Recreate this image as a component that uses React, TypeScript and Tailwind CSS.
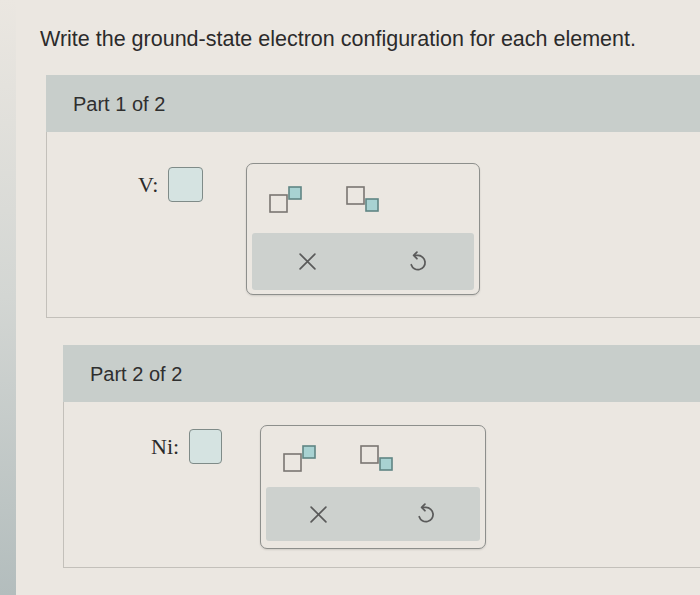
import React from 'react';

const SuperIcon = () => (
  <svg width="34" height="27" viewBox="0 0 34 27" fill="none">
    <rect x="1" y="9" width="17" height="17" stroke="#7a7672" strokeWidth="1.6" />
    <rect x="20" y="1" width="12" height="12" fill="#a8d2d2" stroke="#5f8584" strokeWidth="1.6" />
  </svg>
);

const SubIcon = () => (
  <svg width="34" height="27" viewBox="0 0 34 27" fill="none">
    <rect x="1" y="1" width="17" height="17" stroke="#7a7672" strokeWidth="1.6" />
    <rect x="20" y="13" width="12" height="12" fill="#a8d2d2" stroke="#5f8584" strokeWidth="1.6" />
  </svg>
);

const CloseIcon = () => (
  <svg width="19" height="19" viewBox="0 0 18 18" fill="none" stroke="#5a5a5a" strokeWidth="1.6" strokeLinecap="round">
    <path d="M2 2 L16 16 M16 2 L2 16" />
  </svg>
);

const UndoIcon = () => (
  <svg width="22" height="24" viewBox="0 0 20 22" fill="none" stroke="#5a5a5a" strokeWidth="1.6" strokeLinecap="round" strokeLinejoin="round">
    <path d="M7 5 H10 A6.5 6.5 0 1 1 3.8 13.5" />
    <path d="M9 2 L6 5 L9 8" />
  </svg>
);

// tool palette shown beside each answer box
const Palette = ({ big }: { big: boolean }) => (
  <div
    className={`flex flex-col rounded-[7px] border-[1.5px] border-[#8d8f8c] bg-[#ebe7e1] shadow-[0_1px_2px_rgba(0,0,0,0.12)] ${
      big ? 'w-[234px] h-[132px]' : 'w-[226px] h-[124px]'
    }`}
  >
    <div className={`flex items-end gap-[43px] pl-[22px] ${big ? 'h-[69px] pb-[20px]' : 'h-[61px] pb-[15px]'}`}>
      <SuperIcon />
      <SubIcon />
    </div>
    <div
      className={`mx-[5px] flex flex-1 items-center justify-around rounded-[3px] bg-[#cdd1ce] ${
        big ? 'mb-[4px]' : 'mb-[7px]'
      }`}
    >
      <CloseIcon />
      <UndoIcon />
    </div>
  </div>
);

interface PartProps {
  title: string;
  element: string;
  first: boolean;
}

const Part: React.FC<PartProps> = ({ title, element, first }) => (
  <div className={first ? 'ml-[46px]' : 'ml-[63px] mt-[27px]'}>
    <div className="flex h-[57px] items-center bg-[#c8cecb] pl-[27px] text-[20px] text-[#2f2f2f]">
      {title}
    </div>
    <div
      className={`flex items-start border-b border-l border-[#c3c0ba] bg-[#ebe7e1] ${
        first ? 'h-[186px] pt-[31px] pl-[91px]' : 'h-[166px] pt-[23px] pl-[87px]'
      }`}
    >
      <div className="mt-[4px] flex items-center gap-[10px]">
        <span className="font-['Liberation_Serif',serif] text-[22px] text-[#2a2a2a]">{element}:</span>
        <div
          className={`rounded-[4px] border-[1.5px] border-[#7f8b88] bg-[#d5e3e1] ${
            first ? 'h-[35px] w-[35px]' : 'h-[35px] w-[33px]'
          }`}
        />
      </div>
      <div className={first ? 'ml-[43px]' : 'ml-[38px]'}>
        <Palette big={first} />
      </div>
    </div>
  </div>
);

export default function App() {
  return (
    <div className="flex h-[595px] w-[700px] overflow-hidden bg-[#ebe7e1] font-['Liberation_Sans',Arial,sans-serif]">
      <div className="w-[16px] shrink-0 bg-gradient-to-b from-[#ebe7e1] via-[#d3d6d3] to-[#b3bdbd]" />
      <div className="flex-1">
        <h1 className="pl-[24px] pt-[25px] text-[21.5px] leading-[28px] text-[#2b2b2b]">
          Write the ground-state electron configuration for each element.
        </h1>
        <div className="-ml-[16px] mt-[22px]">
          <Part title="Part 1 of 2" element="V" first={true} />
          <Part title="Part 2 of 2" element="Ni" first={false} />
        </div>
      </div>
    </div>
  );
}
